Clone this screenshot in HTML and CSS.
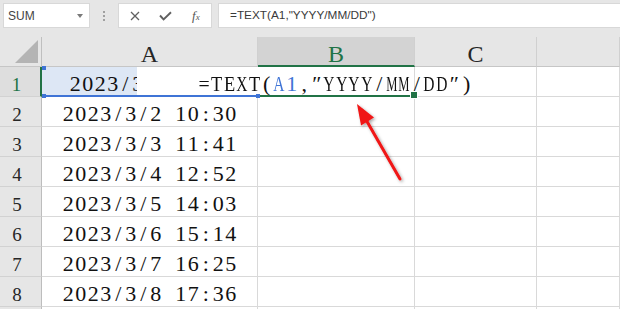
FILE: index.html
```html
<!DOCTYPE html>
<html lang="zh">
<head>
<meta charset="utf-8">
<title>TEXT</title>
<link rel="stylesheet" href="styles.css">
</head>
<body>
<div class="app">
  <div class="fbar">
    <div class="namebox"><span>SUM</span><span class="nb-arrow"></span></div>
    <div class="grip"><i></i><i></i><i></i></div>
    <div class="btns">
      <svg class="ic-x" width="10" height="10" viewBox="0 0 10 10"><path d="M1 1L9 9M9 1L1 9" fill="none" stroke="#606060" stroke-width="1.3"/></svg>
      <svg class="ic-ok" width="13" height="10" viewBox="0 0 13 10"><path d="M1 4.5L4.6 8.4L12 1.2" fill="none" stroke="#606060" stroke-width="1.9"/></svg>
      <span class="fx"><i>f</i><i class="fx-x">x</i></span>
    </div>
    <div class="finput">=TEXT(A1,"YYYY/MM/DD")</div>
  </div>

  <div class="sheet">
    <div class="corner"><svg width="41" height="29" viewBox="0 0 41 29"><path d="M38 3L38 26L15 26Z" fill="#b4b4b4"/></svg></div>
    <div class="ch">A</div>
    <div class="ch ch-sel">B</div>
    <div class="ch">C</div>
    <div class="ch"></div>

    <div class="rh rh-act">1</div>
    <div class="c a1"><div class="a1-fill"><span class="mono">2023/3</span></div></div>
    <div class="c b1"></div>
    <div class="c"></div>
    <div class="c"></div>

    <div class="rh">2</div><div class="c val"><span class="mono">2023/3/2 10:30</span></div><div class="c"></div><div class="c"></div><div class="c"></div>
    <div class="rh">3</div><div class="c val"><span class="mono">2023/3/3 11:41</span></div><div class="c"></div><div class="c"></div><div class="c"></div>
    <div class="rh">4</div><div class="c val"><span class="mono">2023/3/4 12:52</span></div><div class="c"></div><div class="c"></div><div class="c"></div>
    <div class="rh">5</div><div class="c val"><span class="mono">2023/3/5 14:03</span></div><div class="c"></div><div class="c"></div><div class="c"></div>
    <div class="rh">6</div><div class="c val"><span class="mono">2023/3/6 15:14</span></div><div class="c"></div><div class="c"></div><div class="c"></div>
    <div class="rh">7</div><div class="c val"><span class="mono">2023/3/7 16:25</span></div><div class="c"></div><div class="c"></div><div class="c"></div>
    <div class="rh">8</div><div class="c val"><span class="mono">2023/3/8 17:36</span></div><div class="c"></div><div class="c"></div><div class="c"></div>
    <div class="rh"></div><div class="c"></div><div class="c"></div><div class="c"></div><div class="c"></div>
  </div>

  <div class="editor"><span class="mono">=TEXT(</span><span class="mono ref">A1</span><span class="mono">,″YYYY/MM/DD″)</span></div>

  <svg class="arrow" width="620" height="309" viewBox="0 0 620 309">
    <defs>
      <filter id="sh" x="-50%" y="-50%" width="200%" height="200%">
        <feDropShadow dx="1.5" dy="1.5" stdDeviation="1.4" flood-color="#000" flood-opacity="0.35"/>
      </filter>
    </defs>
    <g filter="url(#sh)">
      <line x1="400" y1="179" x2="365" y2="118" stroke="#f01414" stroke-width="3" stroke-linecap="round"/>
      <path d="M357 104L374 117.5L361 125.5Z" fill="#f01414"/>
    </g>
  </svg>
</div>
<script src="script.js"></script>
</body>
</html>
```

FILE: styles.css
```css
* { box-sizing: border-box; margin: 0; padding: 0; }
html, body { width: 620px; height: 309px; overflow: hidden; background: #fff; }
body { font-family: "Liberation Sans", Arial, sans-serif; }

.app { position: relative; width: 620px; height: 309px; overflow: hidden; background: #e6e6e6; }

/* formula bar */
.fbar { height: 37px; display: flex; align-items: flex-start; padding: 3px 0 0 3px; }
.namebox {
  width: 87px; height: 25px; background: #fff; border: 1px solid #d8d8d8;
  display: flex; align-items: center; justify-content: space-between;
  padding: 0 6px 0 4px; font-size: 12px; color: #444;
}
.nb-arrow { width: 0; height: 0; border-left: 3.5px solid transparent; border-right: 3.5px solid transparent; border-top: 4px solid #7a7a7a; }
.grip { width: 28px; height: 25px; display: flex; flex-direction: column; align-items: center; justify-content: center; gap: 2px; }
.grip i { display: block; width: 2px; height: 2px; background: #a0a0a0; }
.btns {
  width: 94px; height: 25px; background: #fff; border: 1px solid #d8d8d8;
  display: flex; align-items: center; padding-left: 11px; gap: 21px;
}
.ic-ok { margin-left: -2px; }
.fx { font-family: "Liberation Serif", serif; font-size: 13px; color: #555; display: flex; align-items: baseline; margin-left: -1px; }
.fx-x { font-size: 9px; }
.finput {
  flex: 1; height: 25px; margin-left: 6px; background: #fff; border: 1px solid #d8d8d8; border-right: none;
  padding-left: 11px; font-size: 11.8px; line-height: 23px; color: #3a3a3a; white-space: nowrap;
}

/* sheet grid */
.sheet {
  display: grid;
  grid-template-columns: 42px 216px 157px 122px 83px;
  grid-auto-rows: 30px;
  background: #fff;
}
.corner { background: #e6e6e6; border-right: 1px solid #bfbfbf; border-bottom: 1px solid #c6c6c6; }
.corner svg { display: block; }
.ch {
  background: #e6e6e6; border-right: 1px solid #d0d0d0; border-bottom: 1px solid #c6c6c6;
  font-family: "Liberation Serif", serif; font-size: 24px; line-height: 26px; padding-top: 4px;
  text-align: center; color: #262626;
}
.ch-sel { background: #d3d3d3; color: #217346; border-bottom: 2px solid #217346; }
.rh {
  background: #e6e6e6; border-right: 1px solid #bdbdbd; border-bottom: 1px solid #d2d2d2;
  font-family: "Liberation Serif", serif; font-size: 19px; line-height: 22px; padding: 7px 7px 0 0;
  text-align: center; color: #262626;
}
.rh-act { background: #dedede; color: #217346; border-right: 2px solid #217346; }
.c { border-right: 1px solid #d9d9d9; border-bottom: 1px solid #d9d9d9; white-space: nowrap; }
.val {
  font-family: "Liberation Serif", serif; font-size: 22px; line-height: 24px; padding: 5px 0 0 20px; color: #111;
}

.a1 { position: relative; border-right-color: #fff; border-bottom: 2px solid #3f74d6; }
.a1-fill {
  width: 95px; height: 100%; background: #dde7f5; overflow: hidden;
  font-family: "Liberation Serif", serif; font-size: 22px; line-height: 24px; padding: 5px 0 0 27px; color: #111;
}
.a1::before, .a1::after { content: ""; position: absolute; width: 4px; height: 4px; background: #3f74d6; }
.a1::before { left: 0; top: -1px; }
.a1::after { left: 0; bottom: -3px; }
.b1 { position: relative; border-bottom: 2px solid #217346; }
.b1::before { content: ""; position: absolute; left: -2px; bottom: -3px; width: 4px; height: 4px; background: #3f74d6; }
.b1::after { content: ""; position: absolute; right: -4px; bottom: -4px; width: 6px; height: 6px; background: #217346; border: 1px solid #fff; }

/* monospace emulation */
.mono { white-space: nowrap; }
.ch-cell { display: inline-flex; justify-content: center; width: 12.5px; }
.gl { display: inline-block; transform-origin: 50% 50%; }

/* in-cell editor overlay */
.editor {
  position: absolute; left: 198px; top: 67px; height: 28px; white-space: nowrap;
  font-family: "Liberation Serif", serif; font-size: 22px; line-height: 24px; padding-top: 5px; color: #111;
}
.ref { color: #3f74d6; }

.arrow { position: absolute; left: 0; top: 0; pointer-events: none; }
```

FILE: script.js
```js
document.querySelectorAll('.mono').forEach(function (el) {
  var text = el.textContent;
  el.textContent = '';
  Array.from(text).forEach(function (ch) {
    var cell = document.createElement('span');
    cell.className = 'ch-cell';
    var g = document.createElement('span');
    g.className = 'gl';
    g.textContent = ch === ' ' ? '\u00a0' : ch;
    cell.appendChild(g);
    el.appendChild(cell);
    var w = g.getBoundingClientRect().width;
    if (w > 11.2) {
      g.style.transform = 'scaleX(' + (11.2 / w).toFixed(3) + ')';
    }
  });
});
```
